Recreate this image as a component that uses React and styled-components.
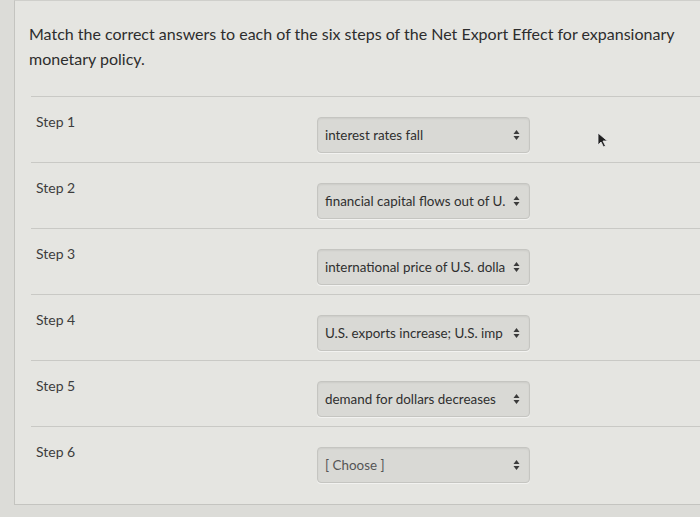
import styled, { createGlobalStyle } from "styled-components";

const Global = createGlobalStyle`
  html, body {
    margin: 0;
    padding: 0;
    background: #dcdcd8;
    font-family: Lato, "Open Sans", sans-serif;
  }
`;

const Page = styled.div`
  width: 700px;
  height: 517px;
  overflow: hidden;
  position: relative;
  background: #dcdcd8;
`;

const Panel = styled.div`
  margin-left: 14px;
  height: 505px;
  background: #e5e5e1;
  border-left: 1px solid #c4c4c0;
  border-bottom: 1px solid #c4c4c0;
  border-top: 1px solid #cfcfcb;
  box-sizing: border-box;
  padding-left: 16px;
`;

const Question = styled.p`
  margin: 0 0 0 -2px;
  padding: 20px 14px 25px 0;
  font-size: 16px;
  line-height: 25px;
  color: #2d2d2d;
`;

const Row = styled.div`
  display: flex;
  border-top: 1px solid #c9c9c5;
  height: ${(p) => p.h || 66}px;
  box-sizing: border-box;
`;

const Label = styled.div`
  width: 281px;
  padding: 16px 0 0 5px;
  font-size: 14px;
  color: #3d3d3d;
`;

const Select = styled.div`
  margin-top: 20px;
  width: 213px;
  height: 36px;
  box-sizing: border-box;
  display: flex;
  align-items: center;
  justify-content: space-between;
  gap: 6px;
  padding: 0 9px 0 7px;
  background: #d9d9d5;
  border: 1px solid #c5c5c1;
  border-radius: 4px;
  box-shadow: inset 0 1px 2px rgba(0, 0, 0, 0.06), 0 1px 0 rgba(255, 255, 255, 0.5);
  font-size: 13.4px;
  color: ${(p) => (p.placeholder ? "#555" : "#2f2f2f")};
`;

const Value = styled.span`
  white-space: nowrap;
`;

const Cursor = styled.svg`
  position: absolute;
  left: 597px;
  top: 132px;
`;

const Arrows = () => (
  <svg width="7" height="12" viewBox="0 0 7 12" style={{ flexShrink: 0 }}>
    <path d="M3.5 1 L6.5 5 H0.5 Z" fill="#3a3a3a" />
    <path d="M3.5 11 L6.5 7 H0.5 Z" fill="#3a3a3a" />
  </svg>
);

const steps = [
  "interest rates fall",
  "financial capital flows out of U.",
  "international price of U.S. dolla",
  "U.S. exports increase; U.S. imp",
  "demand for dollars decreases",
  "[ Choose ]",
];

export default function App() {
  return (
    <Page>
      <Global />
      <Panel>
        <Question>
          Match the correct answers to each of the six steps of the Net Export Effect for expansionary
          monetary policy.
        </Question>
        {steps.map((s, i) => (
          <Row key={i} h={i === 5 ? 82 : 66}>
            <Label>Step {i + 1}</Label>
            <Select placeholder={i === 5}>
              <Value>{s}</Value>
              <Arrows />
            </Select>
          </Row>
        ))}
      </Panel>
      <Cursor width="12" height="16" viewBox="0 0 12 16">
        <path d="M1 1 L1 13 L4 10 L6.5 15 L8.5 14 L6 9 L10.5 9 Z" fill="#222" stroke="#eee" strokeWidth="0.8" />
      </Cursor>
    </Page>
  );
}
